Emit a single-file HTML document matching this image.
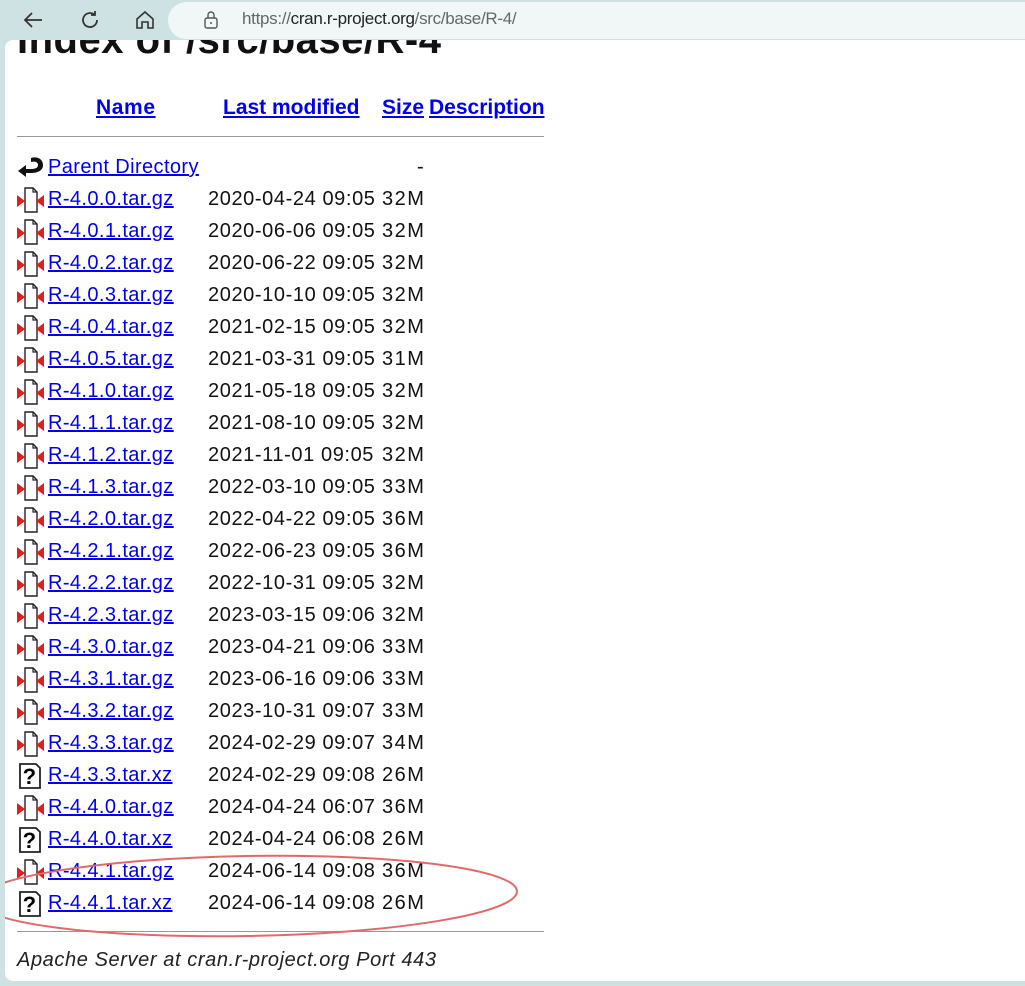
<!DOCTYPE html>
<html><head><meta charset="utf-8"><style>
*{margin:0;padding:0;box-sizing:border-box}
body{width:1025px;height:986px;background:#cfe2e3;font-family:"Liberation Sans",sans-serif;position:relative;overflow:hidden}
.bar{position:absolute;left:168px;top:2px;right:-20px;height:37px;background:#f1f7f7;border-radius:19px}
.url{position:absolute;left:242px;top:9px;font-size:17px;color:#666;letter-spacing:-0.3px}
.url b{font-weight:normal;color:#222}
.page{position:absolute;left:5px;top:40px;width:1030px;height:941px;background:#fff;border-radius:8px 0 0 8px;overflow:hidden}
h1{position:absolute;left:12px;top:-22px;font-size:40px;font-weight:bold;color:#111;white-space:nowrap;letter-spacing:0.5px}
a{text-decoration:underline;color:#0000ee}
.hd{position:absolute;top:56px;font-size:21px;font-weight:bold}
.hr{position:absolute;left:12px;width:527px;height:1px;background:#999}
.row{position:absolute;left:12px;height:32px;font-size:20px;color:#111;white-space:nowrap;letter-spacing:0.4px}
.row svg{position:absolute;left:0;top:2px}
.row a{position:absolute;left:31px;top:4px}
.row .d{position:absolute;left:191px;top:4px;letter-spacing:0.6px}
.row .s{position:absolute;left:365px;top:4px;letter-spacing:1.5px}
.ft{position:absolute;left:12px;top:909px;font-size:20px;font-style:italic;color:#222;letter-spacing:0.6px}
</style></head><body>
<svg style="position:absolute;left:22px;top:10px" width="22" height="20" viewBox="0 0 22 20"><path d="M20 10H3M10 3L3 10l7 7" fill="none" stroke="#333" stroke-width="1.8"/></svg>
<svg style="position:absolute;left:79px;top:9px" width="22" height="22" viewBox="0 0 22 22"><path d="M18 11a7 7 0 1 1-3-5.7M16 2v4h-4" fill="none" stroke="#333" stroke-width="1.8"/></svg>
<svg style="position:absolute;left:134px;top:9px" width="22" height="22" viewBox="0 0 22 22"><path d="M3 10l8-7 8 7v9h-5v-6h-6v6H3z" fill="none" stroke="#333" stroke-width="1.6"/></svg>
<div class="bar"></div>
<svg style="position:absolute;left:203px;top:10px" width="16" height="20" viewBox="0 0 16 20"><rect x="2" y="8" width="12" height="10" rx="2" fill="none" stroke="#555" stroke-width="1.4"/><path d="M5 8V5a3 3 0 0 1 6 0v3" fill="none" stroke="#555" stroke-width="1.4"/><circle cx="8" cy="13" r="1" fill="#555"/></svg>
<div class="url">https://<b>cran.r-project.org</b>/src/base/R-4/</div>
<div class="page">
<h1>Index of /src/base/R-4</h1>
<a class="hd" style="left:91px;letter-spacing:0.6px">Name</a>
<a class="hd" style="left:218px">Last modified</a>
<a class="hd" style="left:377px">Size</a>
<a class="hd" style="left:424px">Description</a>
<div class="hr" style="top:96px"></div>
<div id="rows"></div>
<div class="hr" style="top:891px"></div>
<div class="ft">Apache Server at cran.r-project.org Port 443</div>
<svg style="position:absolute;left:-20px;top:812px" width="560" height="90" viewBox="0 0 560 90"><ellipse cx="262" cy="44" rx="270" ry="40" fill="none" stroke="#e06a6a" stroke-width="2" transform="rotate(-1 262 44)"/></svg>
</div>
<script>
var d=[["Parent Directory","","-","p"],["R-4.0.0.tar.gz","2020-04-24 09:05","32M"],["R-4.0.1.tar.gz","2020-06-06 09:05","32M"],["R-4.0.2.tar.gz","2020-06-22 09:05","32M"],["R-4.0.3.tar.gz","2020-10-10 09:05","32M"],["R-4.0.4.tar.gz","2021-02-15 09:05","32M"],["R-4.0.5.tar.gz","2021-03-31 09:05","31M"],["R-4.1.0.tar.gz","2021-05-18 09:05","32M"],["R-4.1.1.tar.gz","2021-08-10 09:05","32M"],["R-4.1.2.tar.gz","2021-11-01 09:05","32M"],["R-4.1.3.tar.gz","2022-03-10 09:05","33M"],["R-4.2.0.tar.gz","2022-04-22 09:05","36M"],["R-4.2.1.tar.gz","2022-06-23 09:05","36M"],["R-4.2.2.tar.gz","2022-10-31 09:05","32M"],["R-4.2.3.tar.gz","2023-03-15 09:06","32M"],["R-4.3.0.tar.gz","2023-04-21 09:06","33M"],["R-4.3.1.tar.gz","2023-06-16 09:06","33M"],["R-4.3.2.tar.gz","2023-10-31 09:07","33M"],["R-4.3.3.tar.gz","2024-02-29 09:07","34M"],["R-4.3.3.tar.xz","2024-02-29 09:08","26M","q"],["R-4.4.0.tar.gz","2024-04-24 06:07","36M"],["R-4.4.0.tar.xz","2024-04-24 06:08","26M","q"],["R-4.4.1.tar.gz","2024-06-14 09:08","36M"],["R-4.4.1.tar.xz","2024-06-14 09:08","26M","q"]];
var gz='<svg width="27" height="28" viewBox="0 0 27 28"><path d="M8 2h8l4 4v20H8z" fill="#fff" stroke="#222" stroke-width="1.4"/><path d="M16 2v4h4" fill="none" stroke="#222" stroke-width="1.2"/><path d="M0 9l8 6-8 6zM27 9l-8 6 8 6z" fill="#e02020"/></svg>';
var q='<svg width="27" height="28" viewBox="0 0 27 28"><path d="M3 2h16l4 4v20H3z" fill="#fff" stroke="#222" stroke-width="1.8"/><text x="12.5" y="22" font-size="22" font-weight="bold" text-anchor="middle" font-family="Liberation Sans">?</text></svg>';
var p='<svg width="28" height="28" viewBox="0 0 28 26"><path d="M14 3c6-2 12 1 12 7s-6 8-12 8H9v4L1 16l8-6v4h5c4 0 7-1 7-4s-3-4-7-3z" fill="#111"/></svg>';
var h='';
d.forEach(function(r,i){var ic=r[3]=='p'?p:(r[3]=='q'?q:gz);
h+='<div class="row" style="top:'+(112+i*32)+'px">'+ic+'<a>'+r[0]+'</a><span class="d">'+r[1]+'</span><span class="s"'+(r[3]=='p'?' style="left:400px"':'')+'>'+r[2]+'</span></div>';});
document.getElementById('rows').innerHTML=h;
</script>
</body></html>
